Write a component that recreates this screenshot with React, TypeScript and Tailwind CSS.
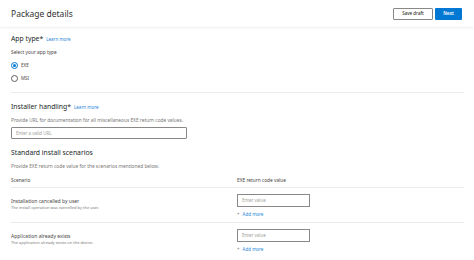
import React from 'react'

const font = { fontFamily: '"Noto Sans", "Open Sans", sans-serif' }

function Radio({ label, checked }: { label: string; checked?: boolean }) {
  return (
    <label className="flex h-[8px] items-center gap-[3px]">
      <span
        className={
          checked
            ? 'flex h-[7px] w-[7px] items-center justify-center rounded-full border border-[#0078d4]'
            : 'flex h-[7px] w-[7px] items-center justify-center rounded-full border border-[#605e5c]'
        }
      >
        {checked && <span className="h-[3px] w-[3px] rounded-full bg-[#0078d4]" />}
      </span>
      <span className="text-[4.5px] leading-[8px] text-[#484644]">{label}</span>
    </label>
  )
}

function ScenarioRow({ title, desc, last }: { title: string; desc: string; last?: boolean }) {
  return (
    <div
      className={
        last
          ? 'grid h-[35px] grid-cols-[226px_1fr]'
          : 'grid h-[35px] grid-cols-[226px_1fr] border-b border-[#edebe9]'
      }
    >
      <div className="pt-[10px]">
        <div className="text-[5px] leading-[6px] text-[#484644]">{title}</div>
        <div className="mt-[1px] text-[4px] leading-[5px] text-[#797775]">{desc}</div>
      </div>
      <div className="pt-[6px]">
        <div className="flex h-[13px] w-[73px] items-center border border-[#8a8886] px-[4px] text-[4.5px] text-[#a19f9d]">
          Enter value
        </div>
        <div className="mt-[4px] flex h-[6px] items-center gap-[3px] text-[4.5px] leading-[6px] text-[#2b88d8]">
          <span className="text-[#8a8886]">+</span>
          <span>Add more</span>
        </div>
      </div>
    </div>
  )
}

export default function App() {
  return (
    <div className="h-[260px] w-[474px] overflow-hidden bg-white" style={font}>
      <header className="flex h-[27px] items-center justify-between pl-[11px] pr-[12px] shadow-[0_1px_2px_rgba(0,0,0,0.07)]">
        <h1 className="text-[8.5px] font-normal leading-[12px] text-[#323130]">Package details</h1>
        <div className="flex gap-[2px]">
          <button
            type="button"
            className="flex h-[12px] w-[40px] items-center justify-center rounded-[1px] border border-[#8a8886] bg-white text-[4.5px] font-medium text-[#323130]"
          >
            Save draft
          </button>
          <button
            type="button"
            className="flex h-[12px] w-[27px] items-center justify-center rounded-[1px] bg-[#0078d4] text-[4.5px] font-semibold text-white"
          >
            Next
          </button>
        </div>
      </header>

      <main className="pl-[11px] pr-[10px]">
        <div className="mt-[7px] flex h-[10px] items-center gap-[3px]">
          <h2 className="text-[6.8px] font-normal leading-[10px] text-[#201f1e]">App type*</h2>
          <span className="text-[4.5px] text-[#2b88d8]">Learn more</span>
        </div>
        <p className="mt-[5px] text-[4.8px] leading-[6px] text-[#484644]">Select your app type</p>
        <div className="mt-[6px]">
          <Radio label="EXE" checked />
        </div>
        <div className="mt-[5px]">
          <Radio label="MSI" />
        </div>

        <div className="mt-[10px] border-t border-[#edebe9]" />

        <div className="mt-[9px] flex h-[10px] items-center gap-[3px]">
          <h2 className="text-[6.8px] font-normal leading-[10px] text-[#201f1e]">Installer handling*</h2>
          <span className="text-[4.5px] text-[#2b88d8]">Learn more</span>
        </div>
        <p className="mt-[5px] text-[4.8px] leading-[6px] text-[#797775]">
          Provide URL for documentation for all miscellaneous EXE return code values.
        </p>
        <div className="mt-[4px] flex h-[12px] w-[176px] items-center rounded-[1px] border border-[#8a8886] px-[4px] text-[4.5px] text-[#a19f9d]">
          Enter a valid URL
        </div>

        <h2 className="mt-[9px] text-[6.8px] font-normal leading-[10px] text-[#201f1e]">
          Standard install scenarios
        </h2>
        <p className="mt-[5px] text-[4.8px] leading-[6px] text-[#797775]">
          Provide EXE return code value for the scenarios mentioned below.
        </p>

        <div className="mt-[8px] grid grid-cols-[226px_1fr] border-b border-[#edebe9] pb-[4px] text-[4.8px] leading-[6px] text-[#484644]">
          <span>Scenario</span>
          <span>EXE return code value</span>
        </div>
        <ScenarioRow title="Installation cancelled by user" desc="The install operation was cancelled by the user." />
        <ScenarioRow title="Application already exists" desc="The application already exists on the device." last />
      </main>
    </div>
  )
}
